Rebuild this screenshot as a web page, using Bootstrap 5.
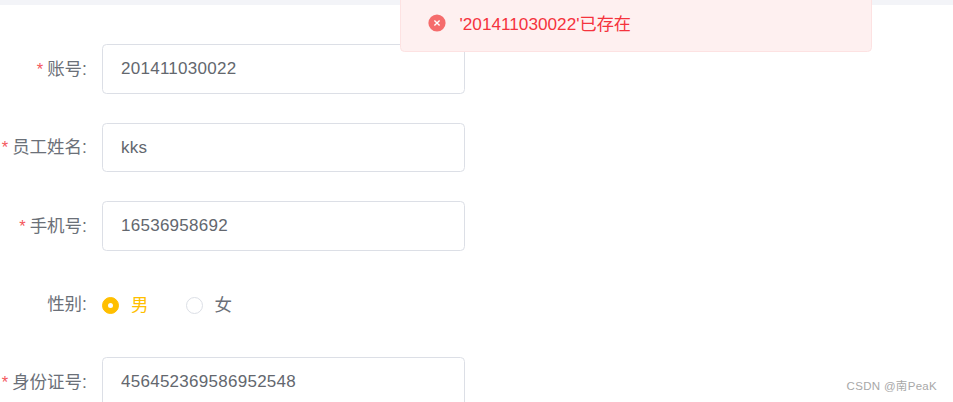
<!DOCTYPE html>
<html lang="zh-CN">
<head>
<meta charset="utf-8">
<title>员工表单</title>
<link href="https://cdn.jsdelivr.net/npm/bootstrap@5.3.0/dist/css/bootstrap.min.css" rel="stylesheet">
<style>
html, body { height: 402px; overflow: hidden; background: #fff; }
body { font-family: "Liberation Sans", "Noto Sans CJK SC", sans-serif; font-size: 17px; color: #606266; }
.topband { height: 5px; background: #f3f4f8; }
.formarea { padding-top: 39.4px; }
.fieldrow { height: 49.75px; margin-bottom: 28.5px; }
.fieldlabel { width: 87px; margin-right: 15px; white-space: nowrap; color: #6b7078; font-size: 17.5px; }
.req { color: #f4575c; margin-right: 4px; font-size: 16.5px; }
.fieldinput { width: 363px; height: 49.75px; border: 1px solid #dcdfe6; border-radius: 4.5px; padding: 0 18px; font-size: 17px; color: #63676e; box-shadow: none; letter-spacing: .27px; }
.radiodot { width: 17px; height: 17px; border-radius: 50%; border: 1px solid #dcdfe6; margin-right: 12px; background: #fff; position: relative; top: 1.5px; }
.radiodot.picked { background: #ffbf00; border-color: #ffbf00; }
.radiodot.picked::after { content: ""; width: 5px; height: 5px; border-radius: 50%; background: #fff; }
.radioopt { font-size: 17.5px; margin-right: 37px; position: relative; top: 1.5px; color: #6b7078; }
.radioopt.picked { color: #ffbf00; }
.toastbox { position: absolute; left: 400px; top: -10px; width: 472px; height: 62px; padding: 7px 0 0 26.5px; background: #fef0f0; border: 1px solid #fde2e2; border-radius: 4.5px; font-size: 17.2px; }
.toastbox span { color: #f5333d; }
.toastbox svg { margin-right: 14px; margin-top: -3px; }
.markline { position: absolute; right: 16px; top: 378px; font-size: 11.5px; color: #a8a8a8; letter-spacing: .3px; }
</style>
</head>
<body class="position-relative">
<div class="topband"></div>
<form class="formarea">
  <div class="fieldrow d-flex align-items-center">
    <label class="fieldlabel text-end"><span class="req">*</span>账号:</label>
    <input class="form-control fieldinput" value="201411030022">
  </div>
  <div class="fieldrow d-flex align-items-center">
    <label class="fieldlabel text-end"><span class="req">*</span>员工姓名:</label>
    <input class="form-control fieldinput" value="kks">
  </div>
  <div class="fieldrow d-flex align-items-center">
    <label class="fieldlabel text-end"><span class="req">*</span>手机号:</label>
    <input class="form-control fieldinput" value="16536958692">
  </div>
  <div class="fieldrow d-flex align-items-center">
    <label class="fieldlabel text-end">性别:</label>
    <span class="radiodot picked d-flex align-items-center justify-content-center"></span>
    <span class="radioopt picked">男</span>
    <span class="radiodot"></span>
    <span class="radioopt">女</span>
  </div>
  <div class="fieldrow d-flex align-items-center">
    <label class="fieldlabel text-end"><span class="req">*</span>身份证号:</label>
    <input class="form-control fieldinput" value="456452369586952548">
  </div>
</form>
<div class="toastbox d-flex align-items-center" role="alert">
  <svg width="18" height="18" viewBox="0 0 18 18" aria-hidden="true"><circle cx="9" cy="9" r="8.6" fill="#f56c6c"/><path d="M6.4 6.4l5.2 5.2M11.6 6.4l-5.2 5.2" stroke="#fff" stroke-width="1.4" fill="none"/></svg>
  <span>'201411030022'已存在</span>
</div>
<div class="markline">CSDN @南PeaK</div>
<script src="https://cdn.jsdelivr.net/npm/bootstrap@5.3.0/dist/js/bootstrap.bundle.min.js"></script>
</body>
</html>
